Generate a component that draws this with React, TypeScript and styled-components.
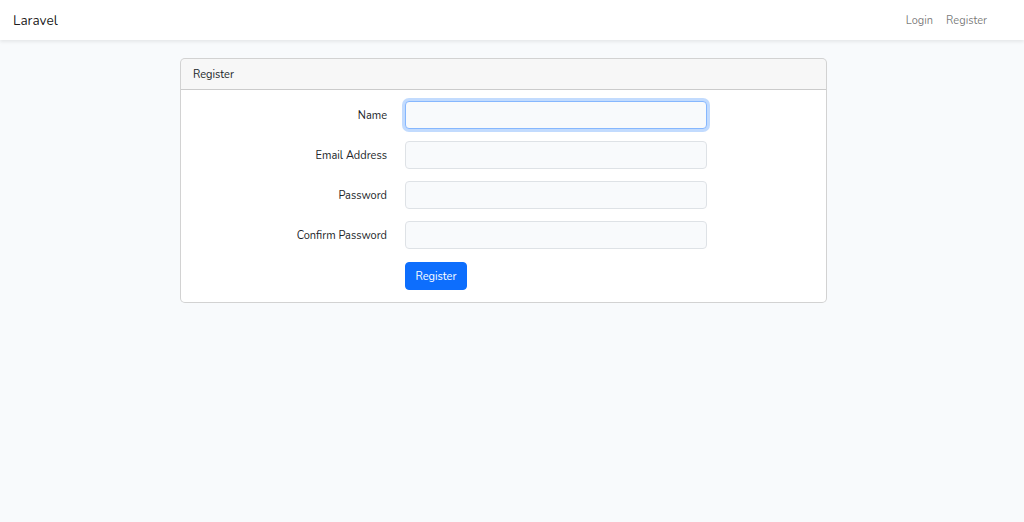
import React from 'react';
import styled, { createGlobalStyle } from 'styled-components';

const GlobalStyle = createGlobalStyle`
  html, body {
    margin: 0;
    padding: 0;
    background: #f8fafc;
    font-family: "Nunito", "Noto Sans", "Open Sans", sans-serif;
    font-size: 11px;
    color: #212529;
  }
  * { box-sizing: border-box; }
`;

const Page = styled.div`
  min-height: 522px;
  background: #f8fafc;
`;

const Navbar = styled.nav`
  height: 40px;
  background: #fff;
  box-shadow: 0 1.6px 3.2px rgba(0, 0, 0, 0.075);
  display: flex;
  align-items: center;
  padding: 0 37px 0 13px;
`;

const Brand = styled.a`
  font-size: 13.6px;
  color: rgba(0, 0, 0, 0.9);
  text-decoration: none;
`;

const NavLinks = styled.div`
  margin-left: auto;
  display: flex;
  gap: 13px;
`;

const NavLink = styled.a`
  color: rgba(0, 0, 0, 0.55);
  text-decoration: none;
  font-size: 11px;
`;

const Main = styled.main`
  padding-top: 18px;
  padding-left: 180px;
`;

const Card = styled.div`
  width: 647px;
  background: #fff;
  border: 1px solid rgba(0, 0, 0, 0.175);
  border-radius: 5px;
  overflow: hidden;
`;

const CardHeader = styled.div`
  height: 31px;
  padding: 0 12px;
  display: flex;
  align-items: center;
  background: rgba(0, 0, 0, 0.03);
  border-bottom: 1px solid rgba(0, 0, 0, 0.175);
`;

const CardBody = styled.form`
  padding: 11px 13px 12px;
  display: flex;
  flex-direction: column;
  gap: 12px;
`;

const Row = styled.div<{ $actions?: boolean }>`
  display: grid;
  grid-template-columns: 193px 302px;
  column-gap: 18px;
  align-items: center;
  margin-top: ${p => (p.$actions ? '1px' : '0')};
`;

const Label = styled.label`
  text-align: right;
`;

const Input = styled.input<{ $focused?: boolean }>`
  height: 28px;
  width: 100%;
  padding: 0 10px;
  background: #f8fafc;
  font: inherit;
  border-radius: 4px;
  border: 1px solid ${p => (p.$focused ? '#86b7fe' : '#dee2e6')};
  box-shadow: ${p => (p.$focused ? '0 0 0 3px rgba(13, 110, 253, 0.25)' : 'none')};
  outline: none;
`;

const Button = styled.button`
  grid-column: 2;
  justify-self: start;
  height: 28px;
  padding: 0 9.5px;
  background: #0d6efd;
  color: #fff;
  border: 1px solid #0d6efd;
  border-radius: 4px;
  font: inherit;
  cursor: pointer;
`;

const fields = [
  { id: 'name', label: 'Name', type: 'text' },
  { id: 'email', label: 'Email Address', type: 'email' },
  { id: 'password', label: 'Password', type: 'password' },
  { id: 'password-confirm', label: 'Confirm Password', type: 'password' },
];

export default function App() {
  return (
    <>
      <GlobalStyle />
      <Page>
        <Navbar>
          <Brand href="#">Laravel</Brand>
          <NavLinks>
            <NavLink href="#">Login</NavLink>
            <NavLink href="#">Register</NavLink>
          </NavLinks>
        </Navbar>
        <Main>
          <Card>
            <CardHeader>Register</CardHeader>
            <CardBody onSubmit={e => e.preventDefault()}>
              {fields.map((f, i) => (
                <Row key={f.id}>
                  <Label htmlFor={f.id}>{f.label}</Label>
                  <Input id={f.id} type={f.type} $focused={i === 0} />
                </Row>
              ))}
              <Row $actions>
                <Button type="submit">Register</Button>
              </Row>
            </CardBody>
          </Card>
        </Main>
      </Page>
    </>
  );
}
